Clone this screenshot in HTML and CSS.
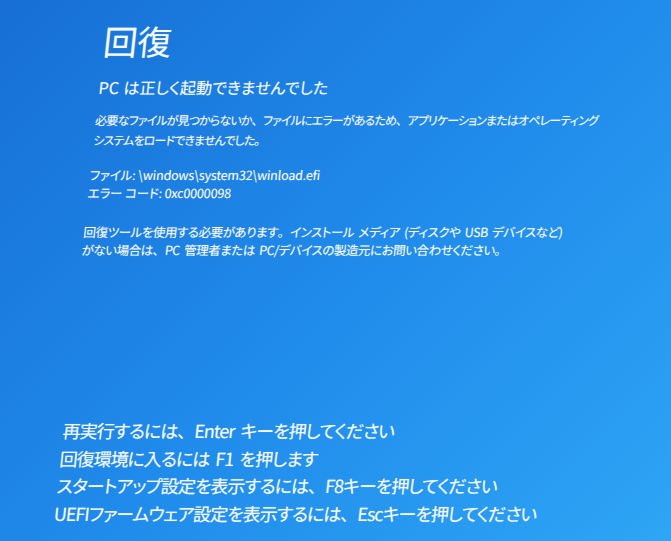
FILE: index.html
```html
<!DOCTYPE html>
<html lang="ja">
<head>
<meta charset="utf-8">
<title>回復</title>
<link rel="stylesheet" href="styles.css">
</head>
<body>
<main class="screen">
  <div class="content">
    <section class="top">
      <h1 class="title">回復</h1>
      <p class="subtitle">PC は正しく起動できませんでした</p>
      <p class="desc">必要なファイルが見つからないか<span class="wide">、</span>ファイルにエラーがあるため<span class="wide">、</span>アプリケーションまたはオペレーティング<br>システムをロードできませんでした<span class="wide">。</span></p>
      <div class="details">
        <div>ファイル: \windows\system32\winload.efi</div>
        <div>エラー コード: 0xc0000098</div>
      </div>
      <p class="advice">回復ツールを使用する必要があります<span class="wide">。</span>インストール メディア (ディスクや USB デバイスなど)<br>がない場合は<span class="wide">、</span>PC 管理者または PC/デバイスの製造元にお問い合わせください<span class="wide">。</span></p>
    </section>
    <ul class="keys">
      <li>再実行するには<span class="wide">、</span>Enter キーを押してください</li>
      <li>回復環境に入るには F1 を押します</li>
      <li>スタートアップ設定を表示するには<span class="wide">、</span>F8キーを押してください</li>
      <li>UEFIファームウェア設定を表示するには<span class="wide">、</span>Escキーを押してください</li>
    </ul>
  </div>
</main>
</body>
</html>
```

FILE: styles.css
```css
html, body {
  margin: 0;
  padding: 0;
  width: 671px;
  height: 541px;
  overflow: hidden;
}

body {
  background: linear-gradient(135deg, #176fd4 0%, #1f8aea 50%, #2ea5f5 100%);
  color: #f6f9ff;
  font-family: "Noto Sans CJK JP", "Noto Sans", sans-serif;
  font-feature-settings: "palt";
}

.screen {
  width: 671px;
  height: 541px;
}

.content {
  box-sizing: border-box;
  height: 541px;
  padding: 21px 0 14px 108px;
  display: flex;
  flex-direction: column;
  transform: skewX(-6deg);
  transform-origin: 0 0;
  text-shadow: 0 0 1px rgba(255, 255, 255, 0.4);
}

.wide {
  font-feature-settings: normal;
}

.title {
  margin: 0;
  font-size: 34px;
  line-height: 40px;
  font-weight: 400;
}

.subtitle {
  margin: 15px 0 0;
  font-size: 16px;
  line-height: 22px;
  word-spacing: 1px;
}

.desc {
  margin: 12px 0 0;
  font-size: 12px;
  line-height: 20px;
  letter-spacing: -0.85px;
  white-space: nowrap;
}

.details {
  margin-top: 16px;
  font-size: 12.5px;
  line-height: 18px;
  letter-spacing: -0.15px;
}

.advice {
  margin: 21px 0 0;
  font-size: 12.5px;
  line-height: 18px;
  letter-spacing: -0.45px;
  word-spacing: 2px;
  white-space: nowrap;
}

.keys {
  list-style: none;
  margin: auto 0 0;
  padding: 0;
  font-size: 18px;
  line-height: 27.5px;
  letter-spacing: -1px;
  word-spacing: 3px;
  white-space: nowrap;
}
```
